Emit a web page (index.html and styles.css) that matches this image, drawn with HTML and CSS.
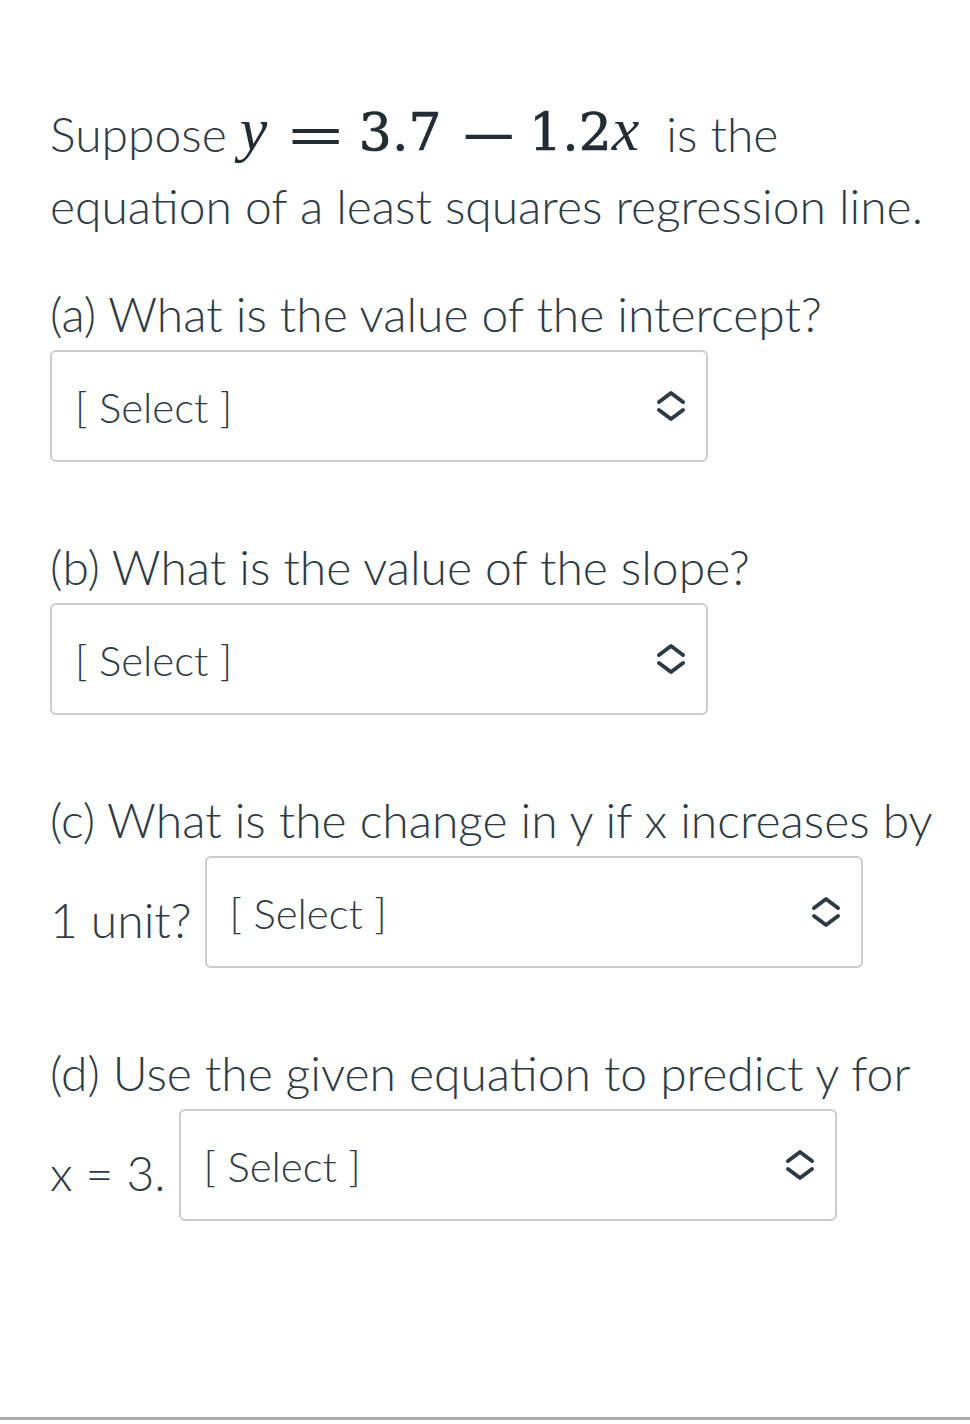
FILE: index.html
```html
<!DOCTYPE html>
<html lang="en">
<head>
<meta charset="utf-8">
<title>Least squares regression line</title>
<link rel="stylesheet" href="styles.css">
</head>
<body>
<div class="page">
  <main class="content">
    <p class="intro">Suppose <span class="math"><i class="mi">y</i><span class="mo eq">=</span><span class="mn">3.7</span><span class="mo minus">−</span><span class="mn">1.2</span><i class="mi last">x</i></span> is the equation of a least squares regression line.</p>

    <div class="question">
      <p class="q-text">(a) What is the value of the intercept?</p>
      <div class="select"><span class="select-label">[ Select ]</span><svg class="chev" viewBox="0 0 30 32" width="30" height="32" aria-hidden="true"><path d="M3 12 L15 3 L27 12 M3 20 L15 29 L27 20"/></svg></div>
    </div>

    <div class="question">
      <p class="q-text">(b) What is the value of the slope?</p>
      <div class="select"><span class="select-label">[ Select ]</span><svg class="chev" viewBox="0 0 30 32" width="30" height="32" aria-hidden="true"><path d="M3 12 L15 3 L27 12 M3 20 L15 29 L27 20"/></svg></div>
    </div>

    <div class="question">
      <p class="q-text">(c) What is the change in y if x increases by 1&nbsp;unit? <span class="select inline"><span class="select-label">[ Select ]</span><svg class="chev" viewBox="0 0 30 32" width="30" height="32" aria-hidden="true"><path d="M3 12 L15 3 L27 12 M3 20 L15 29 L27 20"/></svg></span></p>
    </div>

    <div class="question">
      <p class="q-text">(d) Use the given equation to predict y for x&nbsp;=&nbsp;3. <span class="select inline"><span class="select-label">[ Select ]</span><svg class="chev" viewBox="0 0 30 32" width="30" height="32" aria-hidden="true"><path d="M3 12 L15 3 L27 12 M3 20 L15 29 L27 20"/></svg></span></p>
    </div>
  </main>
  <div class="rule"></div>
</div>
</body>
</html>
```
FILE: styles.css
```css
html, body {
  margin: 0;
  padding: 0;
  background: #ffffff;
}

.page {
  min-height: 1424px;
  display: flex;
  flex-direction: column;
}

.content {
  padding: 98px 32px 0 50px;
  font-family: Lato, "Noto Sans", sans-serif;
  font-weight: 300;
  font-size: 48px;
  line-height: 72px;
  color: #2d3b45;
}

p {
  margin: 0;
}

.intro {
  margin-bottom: 36px;
}

.math {
  font-family: "DejaVu Serif", "Liberation Serif", serif;
  font-size: 52px;
  line-height: 1;
  white-space: nowrap;
  color: #222c33;
  vertical-align: 2px;
}

.mi {
  font-family: "Liberation Serif", "DejaVu Serif", serif;
  font-size: 62px;
  font-style: italic;
  font-weight: 400;
}

.mi.last {
  margin-right: 14px;
}

.mn {
  font-weight: 400;
  -webkit-text-stroke: 0.7px #222c33;
}

.mo {
  display: inline-block;
  line-height: 1;
  vertical-align: -3px;
  transform: scaleX(1.42);
}

.mo.eq {
  margin: 0 21px 0 27px;
}

.mo.minus {
  margin: 0 19px 0 25px;
}

.question {
  margin-bottom: 69px;
}

.select {
  box-sizing: border-box;
  width: 658px;
  height: 112px;
  border: 2px solid #cccccc;
  border-radius: 6px;
  background: #ffffff;
  display: flex;
  align-items: center;
  justify-content: space-between;
  padding: 0 20px 0 23px;
  font-size: 42px;
  line-height: 1;
}

.select.inline {
  display: inline-flex;
  vertical-align: 9px;
}

.select-label {
  padding-top: 2px;
}

.chev {
  display: block;
  fill: none;
  stroke: #2d3b45;
  stroke-width: 4;
  stroke-linecap: round;
  stroke-linejoin: round;
}

.rule {
  margin-top: auto;
  height: 3px;
  margin-bottom: 4px;
  background: #aaaaaa;
}
```
